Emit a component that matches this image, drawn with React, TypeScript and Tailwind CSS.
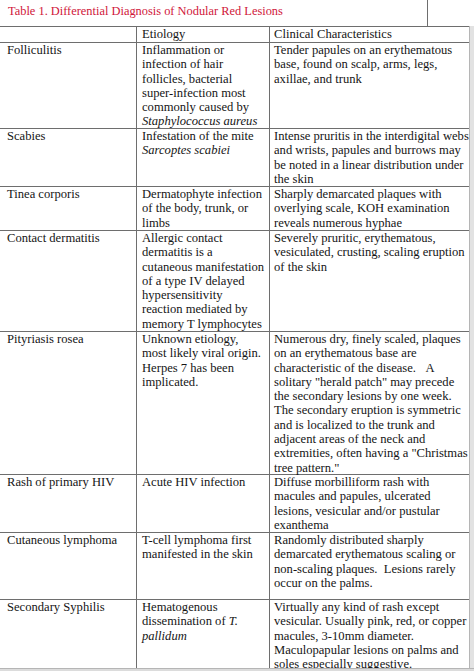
import React from "react";

type Line = React.ReactNode;

interface Row {
  name: string;
  etiology: Line[];
  clinical: Line[];
  h: string;
}

const rows: Row[] = [
  {
    name: "Folliculitis",
    h: "h-[86px]",
    etiology: [
      "Inflammation or",
      "infection of hair",
      "follicles, bacterial",
      "super-infection most",
      "commonly caused by",
      <i key="s">Staphylococcus aureus</i>,
    ],
    clinical: [
      "Tender papules on an erythematous",
      "base, found on scalp, arms, legs,",
      "axillae, and trunk",
    ],
  },
  {
    name: "Scabies",
    h: "h-[58px]",
    etiology: ["Infestation of the mite", <i key="s">Sarcoptes scabiei</i>],
    clinical: [
      "Intense pruritis in the interdigital webs",
      "and wrists, papules and burrows may",
      "be noted in a linear distribution under",
      "the skin",
    ],
  },
  {
    name: "Tinea corporis",
    h: "h-[44px]",
    etiology: ["Dermatophyte infection", "of the body, trunk, or", "limbs"],
    clinical: [
      "Sharply demarcated plaques with",
      "overlying scale, KOH examination",
      "reveals numerous hyphae",
    ],
  },
  {
    name: "Contact dermatitis",
    h: "h-[101px]",
    etiology: [
      "Allergic contact",
      "dermatitis is a",
      "cutaneous manifestation",
      "of a type IV delayed",
      "hypersensitivity",
      "reaction mediated by",
      "memory T lymphocytes",
    ],
    clinical: [
      "Severely pruritic, erythematous,",
      "vesiculated, crusting, scaling eruption",
      "of the skin",
    ],
  },
  {
    name: "Pityriasis rosea",
    h: "h-[143px]",
    etiology: [
      "Unknown etiology,",
      "most likely viral origin.",
      "Herpes 7 has been",
      "implicated.",
    ],
    clinical: [
      "Numerous dry, finely scaled, plaques",
      "on an erythematous base are",
      "characteristic of the disease.\u00a0\u00a0\u00a0A",
      "solitary \"herald patch\" may precede",
      "the secondary lesions by one week.",
      "The secondary eruption is symmetric",
      "and is localized to the trunk and",
      "adjacent areas of the neck and",
      "extremities, often having a \"Christmas",
      "tree pattern.\"",
    ],
  },
  {
    name: "Rash of primary HIV",
    h: "h-[58px]",
    etiology: ["Acute HIV infection"],
    clinical: [
      "Diffuse morbilliform rash with",
      "macules and papules, ulcerated",
      "lesions, vesicular and/or pustular",
      "exanthema",
    ],
  },
  {
    name: "Cutaneous lymphoma",
    h: "h-[67px]",
    etiology: ["T-cell lymphoma first", "manifested in the skin"],
    clinical: [
      "Randomly distributed sharply",
      "demarcated erythematous scaling or",
      "non-scaling plaques.\u00a0\u00a0Lesions rarely",
      "occur on the palms.",
    ],
  },
  {
    name: "Secondary Syphilis",
    h: "h-[74px]",
    etiology: [
      "Hematogenous",
      <span key="t">
        dissemination of <i>T.</i>
      </span>,
      <i key="p">pallidum</i>,
    ],
    clinical: [
      "Virtually any kind of rash except",
      "vesicular. Usually pink, red, or copper",
      "macules, 3-10mm diameter.",
      "Maculopapular lesions on palms and",
      "soles especially suggestive.",
    ],
  },
];

function Lines({ lines }: { lines: Line[] }) {
  return (
    <>
      {lines.map((l, i) => (
        <div key={i} className="whitespace-nowrap">
          {l}
        </div>
      ))}
    </>
  );
}

export default function App() {
  return (
    <div
      className="relative w-[474px] h-[671px] bg-white text-[#151515] overflow-hidden text-[12.6px] leading-[14.3px]"
      style={{ fontFamily: '"Liberation Serif", "Times New Roman", serif' }}
    >
      {/* title cell */}
      <div className="flex h-[26px]">
        <div className="w-[428px] border-r border-[#6e6e6e] pl-[8px] pt-[4px] text-[12.4px] leading-[15px] text-[#d0163a]">
          Table 1. Differential Diagnosis of Nodular Red Lesions
        </div>
      </div>

      <div className="flex h-[642px] overflow-hidden">
        <div className="w-[469px] border-t border-[#6e6e6e]">
          {/* header */}
          <div className="grid grid-cols-[137px_133px_199px] h-[16px] border-b border-[#6e6e6e]">
            <div className="border-r border-[#6e6e6e]" />
            <div className="border-r border-[#6e6e6e] pl-[5px]">Etiology</div>
            <div className="pl-[4px]">Clinical Characteristics</div>
          </div>
          {rows.map((r) => (
            <div
              key={r.name}
              className={`grid grid-cols-[137px_133px_199px] border-b border-[#6e6e6e] ${r.h}`}
            >
              <div className="border-r border-[#6e6e6e] pl-[7px]">{r.name}</div>
              <div className="border-r border-[#6e6e6e] pl-[5px]">
                <Lines lines={r.etiology} />
              </div>
              <div className="pl-[4px]">
                <Lines lines={r.clinical} />
              </div>
            </div>
          ))}
        </div>
        <div className="w-[5px] bg-[#e2e2e2] border-l border-[#b5b5b5]" />
      </div>
      <div className="h-[3px] bg-[#dcdcdc] border-t border-[#b5b5b5]" />
    </div>
  );
}
